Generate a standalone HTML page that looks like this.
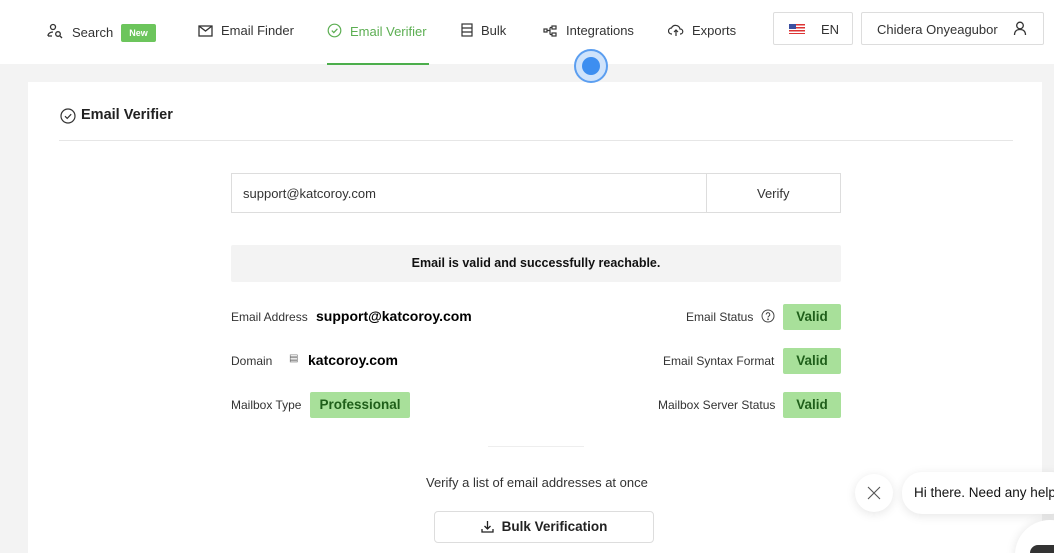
<!DOCTYPE html>
<html><head><meta charset="utf-8"><style>
*{box-sizing:border-box;margin:0;padding:0}
html,body{width:1054px;height:553px;overflow:hidden}
body{background:#f3f3f3;font-family:"Liberation Sans",sans-serif;color:#222;position:relative}
.hdr{position:absolute;left:0;top:0;width:1054px;height:64px;background:#fff}
.a{position:absolute;font-size:13px;color:#333;top:23px;white-space:nowrap}
.a svg{vertical-align:-2px;margin-right:8px}
.new{display:inline-block;background:#6cc55c;color:#fff;font-size:9px;font-weight:bold;padding:4px 8px;border-radius:2px;margin-left:8px;vertical-align:1px}
.box{position:absolute;top:12px;height:33px;border:1px solid #ddd;background:#fff;border-radius:2px;font-size:13px;color:#333}
.card{position:absolute;left:28px;top:82px;width:1014px;height:480px;background:#fff}
.t{position:absolute;font-size:13px;color:#333;white-space:nowrap}
.pill{position:absolute;background:#a8e09a;color:#1f5f1a;font-weight:bold;font-size:13.5px;border-radius:2px;text-align:center;line-height:26px;height:26px}
.b{position:absolute;font-weight:bold;font-size:14px;color:#000}
</style></head><body>
<div class="hdr">
 <div class="a" style="left:46px"><svg width="18" height="16" viewBox="0 0 18 16" fill="none" stroke="#333" stroke-width="1.3"><circle cx="7" cy="4" r="2.5"/><path d="M2 13c0-3 3-4 5-4"/><path d="M2 13h4"/><circle cx="12" cy="11" r="2.3"/><path d="M14 13l2 2"/></svg>Search<span class="new">New</span></div>
 <div class="a" style="left:198px"><svg width="15" height="12" viewBox="0 0 15 12" fill="none" stroke="#333" stroke-width="1.3"><rect x="1" y="1" width="13" height="10"/><path d="M1 1l6.5 5 6.5-5"/></svg>Email Finder</div>
 <div class="a" style="left:327px;color:#5cae52"><svg width="15" height="15" viewBox="0 0 15 15" fill="none" stroke="#5cae52" stroke-width="1.2"><circle cx="7.5" cy="7.5" r="6.3"/><path d="M4.8 7.6l2 2 3.6-3.8"/></svg>Email Verifier</div>
 <div style="position:absolute;left:327px;top:63px;width:102px;height:2px;background:#4cae4c"></div>
 <div class="a" style="left:461px"><svg width="12" height="14" viewBox="0 0 12 14" fill="none" stroke="#333" stroke-width="1.2"><rect x="1" y="1" width="10" height="12"/><path d="M1 5h10M1 9h10"/></svg>Bulk</div>
 <div class="a" style="left:543px"><svg width="15" height="12" viewBox="0 0 15 12" fill="none" stroke="#333" stroke-width="1.2"><rect x="1" y="4" width="3" height="3"/><rect x="9" y="1" width="4" height="3"/><rect x="9" y="8" width="4" height="3"/><path d="M4 5.5h3M7 2.5v7M7 2.5h2M7 9.5h2"/></svg>Integrations</div>
 <div class="a" style="left:668px"><svg width="16" height="13" viewBox="0 0 16 13" fill="none" stroke="#333" stroke-width="1.2"><path d="M4 10H3.5a3 3 0 010-6 4.5 4.5 0 018.5 1 2.5 2.5 0 01.5 5H12"/><path d="M8 12V6M6 8l2-2 2 2"/></svg>Exports</div>
 <div class="box" style="left:773px;width:80px"><span style="position:absolute;left:15px;top:11px;width:16px;height:10px;background:repeating-linear-gradient(#d33 0 1.5px,#fff 1.5px 3px)"><span style="position:absolute;left:0;top:0;width:7px;height:5px;background:#3b4fa0"></span></span><span style="position:absolute;left:47px;top:9px">EN</span></div>
 <div class="box" style="left:861px;width:183px"><span style="position:absolute;left:15px;top:9px">Chidera Onyeagubor</span><svg style="position:absolute;left:151px;top:8px" width="14" height="15" viewBox="0 0 14 15" fill="none" stroke="#333" stroke-width="1.3"><circle cx="7" cy="4.5" r="3.3"/><path d="M1.5 14c0-4 2.5-5.5 5.5-5.5s5.5 1.5 5.5 5.5"/></svg></div>
</div>
<div class="card">
 <svg style="position:absolute;left:32px;top:26px" width="16" height="16" viewBox="0 0 16 16" fill="none" stroke="#333" stroke-width="1.2"><circle cx="8" cy="8" r="7"/><path d="M5 8.2l2.2 2.2 4-4.2"/></svg>
 <div class="t" style="left:53px;top:25px;font-size:14.5px;font-weight:bold;color:#222">Email Verifier</div>
 <div style="position:absolute;left:31px;top:58px;width:954px;height:1px;background:#e6e6e6"></div>
 <div style="position:absolute;left:203px;top:91px;width:476px;height:40px;border:1px solid #ddd"><span class="t" style="left:11px;top:12px">support@katcoroy.com</span></div>
 <div style="position:absolute;left:678px;top:91px;width:135px;height:40px;border:1px solid #ddd"><span class="t" style="left:50px;top:12px">Verify</span></div>
 <div style="position:absolute;left:203px;top:163px;width:610px;height:37px;background:#f3f3f3;border-radius:2px;text-align:center;font-size:12.5px;font-weight:bold;line-height:37px;color:#111">Email is valid and successfully reachable.</div>
 <div class="t" style="left:203px;top:228px;font-size:12px">Email Address</div><div class="b" style="left:288px;top:226px">support@katcoroy.com</div>
 <div class="t" style="left:203px;top:272px;font-size:12px">Domain</div><div class="t" style="left:261px;top:271px;font-size:10px;color:#666">▤</div><div class="b" style="left:280px;top:270px">katcoroy.com</div>
 <div class="t" style="left:203px;top:316px;font-size:12px">Mailbox Type</div><div class="pill" style="left:282px;top:310px;width:100px">Professional</div>
 <div class="t" style="left:658px;top:228px;font-size:12px">Email Status</div><svg style="position:absolute;left:733px;top:227px" width="14" height="14" viewBox="0 0 14 14" fill="none" stroke="#444" stroke-width="1"><circle cx="7" cy="7" r="6"/><path d="M5.2 5.5a1.8 1.8 0 113 1.3c-.8.5-1.2.8-1.2 1.7"/><circle cx="7" cy="10.3" r=".4"/></svg><div class="pill" style="left:755px;top:222px;width:58px">Valid</div>
 <div class="t" style="left:635px;top:272px;font-size:12px">Email Syntax Format</div><div class="pill" style="left:755px;top:266px;width:58px">Valid</div>
 <div class="t" style="left:630px;top:316px;font-size:12px">Mailbox Server Status</div><div class="pill" style="left:755px;top:310px;width:58px">Valid</div>
 <div style="position:absolute;left:460px;top:364px;width:96px;height:1px;background:#eee"></div>
 <div class="t" style="left:398px;top:393px">Verify a list of email addresses at once</div>
 <div style="position:absolute;left:406px;top:429px;width:220px;height:32px;border:1px solid #ddd;border-radius:4px;text-align:center;line-height:30px;font-size:13.5px;font-weight:bold;color:#222"><svg style="vertical-align:-2px;margin-right:8px" width="13" height="13" viewBox="0 0 13 13" fill="none" stroke="#222" stroke-width="1.3"><path d="M6.5 1v8M3.5 6l3 3 3-3M1 9v3h11V9"/></svg>Bulk Verification</div>
</div>
<div style="position:absolute;left:574px;top:49px;width:34px;height:34px;border-radius:50%;background:#cfe3fb;border:2px solid #5b9ef0"></div>
<div style="position:absolute;left:582px;top:57px;width:18px;height:18px;border-radius:50%;background:#3d8ef0"></div>
<div style="position:absolute;left:855px;top:474px;width:38px;height:38px;border-radius:50%;background:#fff;box-shadow:0 2px 10px rgba(0,0,0,.1)"><svg style="position:absolute;left:12px;top:12px" width="14" height="14" viewBox="0 0 14 14" stroke="#555" stroke-width="1.1"><path d="M1 1l12 12M13 1L1 13"/></svg></div>
<div style="position:absolute;left:902px;top:472px;width:170px;height:42px;border-radius:20px;background:#fff;box-shadow:0 2px 10px rgba(0,0,0,.1);font-size:13.5px;line-height:42px;padding-left:12px;color:#111;white-space:nowrap">Hi there. Need any help?</div>
<div style="position:absolute;left:1015px;top:520px;width:70px;height:70px;border-radius:50%;background:#fff;box-shadow:0 0 10px rgba(0,0,0,.1)"></div>
<div style="position:absolute;left:1030px;top:545px;width:40px;height:30px;border-radius:8px;background:#333"></div>
</body></html>
